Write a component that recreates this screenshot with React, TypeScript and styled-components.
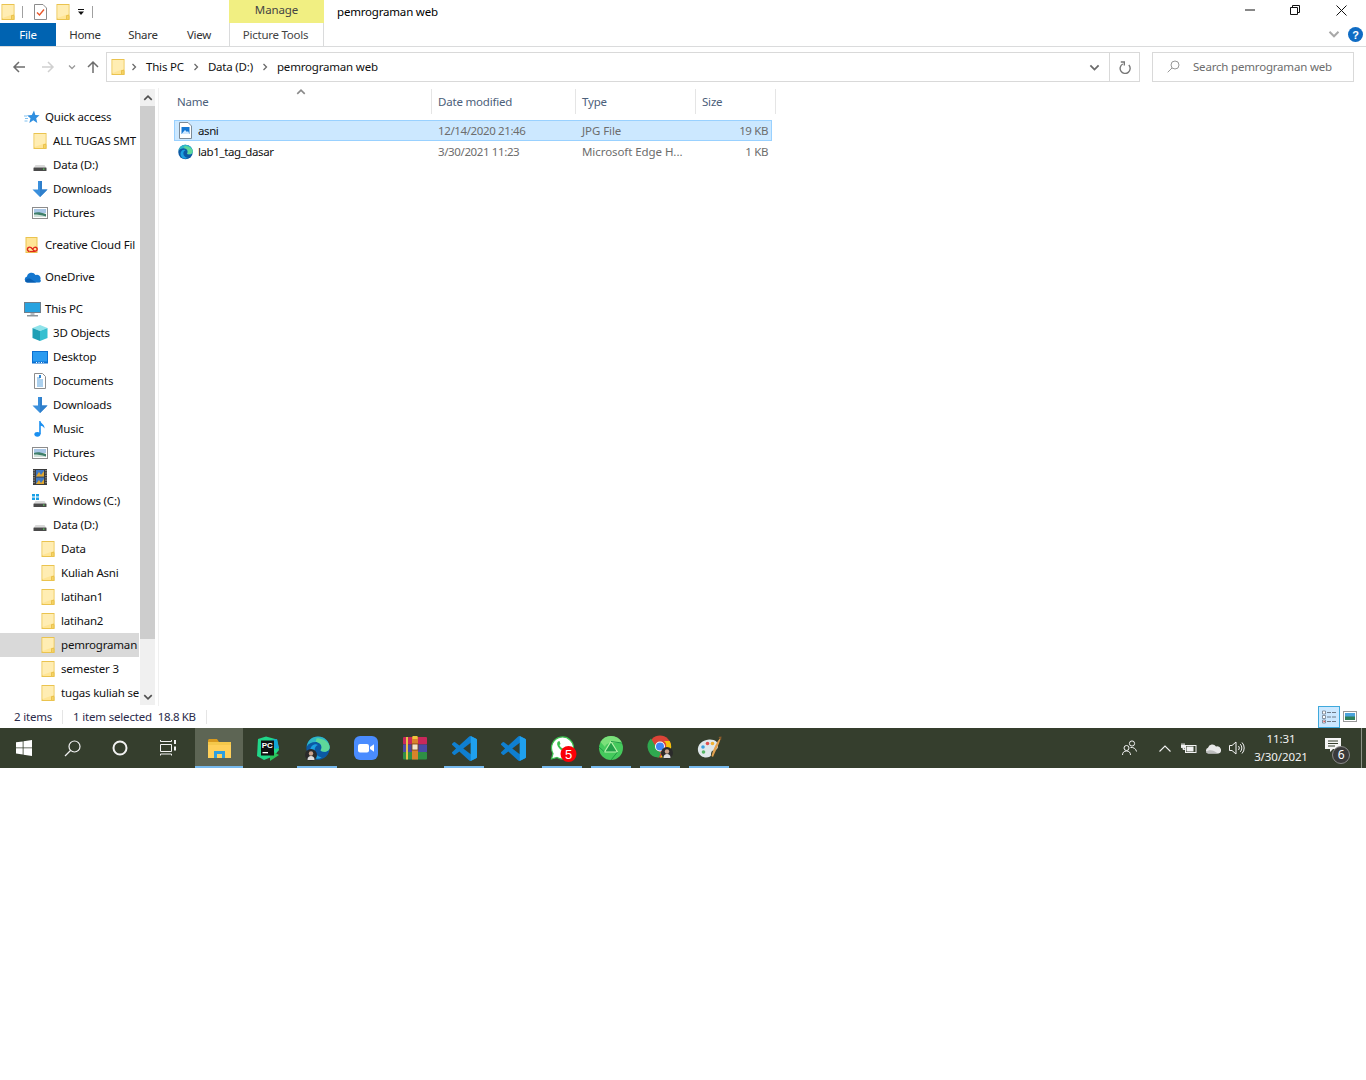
import React from 'react';
import styled, { createGlobalStyle } from 'styled-components';

const GlobalStyle = createGlobalStyle`
  html, body { margin: 0; padding: 0; background: #fff; }
  body { font-family: "Noto Sans", "Open Sans", Arial, sans-serif; font-size: 11.5px; letter-spacing: -0.19px; color: #000; }
  * { box-sizing: border-box; }
  svg { display: block; flex: none; }
`;

const Window = styled.div`
  width: 1366px;
  height: 728px;
  display: flex;
  flex-direction: column;
  overflow: hidden;
`;

/* title strip */
const TitleRow = styled.div`
  height: 23px;
  display: flex;
  align-items: center;
`;
const Qat = styled.div`
  width: 229px;
  display: flex;
  align-items: center;
  padding-left: 1px;
`;
const QatSep = styled.div<{ $left: number; $right: number }>`
  width: 1px;
  height: 12px;
  background: #a0a0a0;
  margin: 0 ${p => p.$right}px 0 ${p => p.$left}px;
`;
const QatGap = styled.div<{ $w: number }>`
  width: ${p => p.$w}px;
`;
const ManageTab = styled.div`
  width: 95px;
  height: 23px;
  background: #f1ef82;
  color: #444;
  letter-spacing: -0.1px;
  display: flex;
  align-items: center;
  justify-content: center;
  padding-bottom: 5px;
`;
const WindowTitle = styled.div`
  flex: 1;
  padding-left: 13px;
  padding-bottom: 1px;
`;
const WinButton = styled.div`
  width: 46px;
  height: 20px;
  display: flex;
  align-items: center;
  justify-content: center;
`;
const WinControls = styled.div`
  display: flex;
  margin-right: 2px;
  margin-top: -3px;
`;

/* ribbon tabs */
const RibbonRow = styled.div`
  height: 24px;
  display: flex;
  border-bottom: 1px solid #dadbdc;
`;
const FileTab = styled.div`
  width: 56px;
  background: #0063b1;
  color: #fff;
  display: flex;
  align-items: center;
  justify-content: center;
`;
const RibbonTab = styled.div<{ $w: number }>`
  width: ${p => p.$w}px;
  display: flex;
  align-items: center;
  justify-content: center;
  color: #333;
  letter-spacing: -0.25px;
`;
const ContextTab = styled(RibbonTab)`
  margin-left: 3px;
  border-left: 1px solid #dadbdc;
  border-right: 1px solid #dadbdc;
  height: 23px;
  background: #fff;
  color: #444;
  padding-right: 2px;
`;
const RibbonEnd = styled.div`
  margin-left: auto;
  display: flex;
  align-items: center;
  gap: 8px;
  padding-right: 3px;
  margin-top: -1px;
`;

/* address row */
const AddressRow = styled.div`
  height: 41px;
  padding-top: 5px;
  display: flex;
  align-items: flex-start;
`;
const NavButtons = styled.div`
  width: 106px;
  height: 30px;
  display: flex;
  align-items: center;
`;
const NavButton = styled.div<{ $w: number }>`
  width: ${p => p.$w}px;
  display: flex;
  justify-content: center;
`;
const AddressBox = styled.div`
  width: 1034px;
  height: 30px;
  border: 1px solid #d9d9d9;
  display: flex;
  align-items: center;
  padding-left: 4px;
`;
const Crumb = styled.span`
  color: #111;
  padding-bottom: 1px;
`;
const CrumbChevron = styled.div<{ $l: number; $r: number }>`
  margin: 0 ${p => p.$r}px 0 ${p => p.$l}px;
`;
const AddressEnd = styled.div`
  margin-left: auto;
  display: flex;
  height: 100%;
  align-items: center;
`;
const DropSlot = styled.div`
  width: 30px;
  height: 100%;
  display: flex;
  align-items: center;
  justify-content: center;
  border-right: 1px solid #d9d9d9;
`;
const RefreshSlot = styled.div`
  width: 29px;
  display: flex;
  justify-content: center;
`;
const SearchBox = styled.div`
  width: 202px;
  height: 30px;
  margin-left: 12px;
  border: 1px solid #d9d9d9;
  display: flex;
  align-items: center;
  padding: 0 0 1px 14px;
  color: #6d6d6d;
  gap: 13px;
`;

/* main */
const Main = styled.div`
  height: 618px;
  display: flex;
`;
const Sidebar = styled.div`
  width: 159px;
  display: flex;
  border-right: 1px solid #f0f0f0;
`;
const NavList = styled.div`
  width: 140px;
  padding-top: 17px;
  display: flex;
  flex-direction: column;
  overflow: hidden;
`;
const NavRow = styled.div<{ $selected?: boolean; $gap?: boolean }>`
  height: 24px;
  width: 139px;
  flex: none;
  display: flex;
  align-items: center;
  white-space: nowrap;
  color: #111;
  margin-top: ${p => (p.$gap ? 8 : 0)}px;
  background: ${p => (p.$selected ? '#d9d9d9' : 'transparent')};
`;
const NavIconSlot = styled.div<{ $level: number }>`
  width: ${p => 40 + p.$level * 8}px;
  flex: none;
  display: flex;
  justify-content: flex-end;
  margin-right: 5px;
`;
const NavLabel = styled.span`
  padding-bottom: 1px;
`;
const IconBox = styled.div`
  width: 16px;
  display: flex;
  justify-content: center;
`;
const Scrollbar = styled.div`
  width: 15px;
  margin-top: 1px;
  height: 616px;
  background: #f0f0f0;
  display: flex;
  flex-direction: column;
`;
const ScrollButton = styled.div`
  height: 17px;
  display: flex;
  align-items: center;
  justify-content: center;
  flex: none;
`;
const ScrollThumb = styled.div`
  height: 533px;
  background: #cdcdcd;
  flex: none;
`;
const ScrollSpacer = styled.div`
  flex: 1;
`;

const Content = styled.div`
  flex: 1;
  padding-left: 12px;
  padding-top: 1px;
  position: relative;
`;
const HeaderRow = styled.div`
  display: flex;
  height: 25px;
  margin-bottom: 6px;
`;
const HeaderCell = styled.div<{ $w: number }>`
  width: ${p => p.$w}px;
  padding-left: 6px;
  display: flex;
  align-items: center;
  color: #4c607a;
  border-right: 1px solid #e5e5e5;
`;
const SortCaret = styled.div`
  position: absolute;
  left: 137px;
  top: -1px;
`;
const FileRow = styled.div<{ $selected?: boolean }>`
  margin-left: 3px;
  width: 598px;
  height: 21px;
  display: grid;
  grid-template-columns: 257px 144px 120px 75px;
  align-items: center;
  border: 1px solid ${p => (p.$selected ? '#99d1ff' : 'transparent')};
  background: ${p => (p.$selected ? '#cce8ff' : 'transparent')};
`;
const NameCell = styled.div`
  display: flex;
  align-items: center;
  gap: 5px;
  padding-left: 3px;
  color: #111;
  letter-spacing: -0.4px;
`;
const DateCell = styled.div`
  color: #6d6d6d;
  padding-left: 6px;
  letter-spacing: -0.38px;
  white-space: nowrap;
`;
const TypeCell = styled.div`
  color: #6d6d6d;
  padding-left: 6px;
  letter-spacing: -0.07px;
  white-space: nowrap;
`;
const SizeCell = styled.div`
  color: #6d6d6d;
  padding-right: 3px;
  letter-spacing: -0.38px;
  text-align: right;
`;

/* status bar */
const StatusBar = styled.div`
  height: 22px;
  display: flex;
  align-items: center;
  padding: 0 0 1px 14px;
  color: #2a2a4a;
`;
const StatusSep = styled.div<{ $l: number; $r: number }>`
  width: 1px;
  height: 14px;
  background: #e5e5e5;
  margin: 0 ${p => p.$r}px 0 ${p => p.$l}px;
`;
const SelectedSize = styled.span`
  margin-left: 6px;
  letter-spacing: -0.4px;
`;
const ViewButtons = styled.div`
  margin-left: auto;
  margin-right: 8px;
  display: flex;
  align-items: center;
  gap: 2px;
`;
const ViewButton = styled.div<{ $active?: boolean }>`
  width: ${p => (p.$active ? 22 : 16)}px;
  height: 22px;
  display: flex;
  align-items: center;
  justify-content: center;
  background: ${p => (p.$active ? '#cce8ff' : 'transparent')};
  border: ${p => (p.$active ? '1px solid #3fa9dc' : 'none')};
`;

/* taskbar */
const Taskbar = styled.div`
  width: 1366px;
  height: 40px;
  background: #353e2d;
  display: flex;
  align-items: stretch;
  color: #fff;
`;
const StartGroup = styled.div`
  display: flex;
  margin-right: 3px;
`;
const TaskSlot = styled.div`
  width: 48px;
  display: flex;
  align-items: center;
  justify-content: center;
`;
const TaskItems = styled.div`
  display: flex;
  gap: 1px;
`;
const TaskItem = styled.div<{ $active?: boolean; $running?: boolean }>`
  width: 48px;
  position: relative;
  display: flex;
  align-items: center;
  justify-content: center;
  background: ${p => (p.$active ? '#5d6554' : 'transparent')};
  &::after {
    content: '';
    position: absolute;
    bottom: 0;
    height: 2px;
    left: ${p => (p.$active ? 0 : 4)}px;
    right: ${p => (p.$active ? 0 : 4)}px;
    background: ${p => (p.$active || p.$running ? '#76b9ed' : 'transparent')};
  }
`;
const Tray = styled.div`
  margin-left: auto;
  display: flex;
  align-items: stretch;
`;
const PeopleSlot = styled.div`
  width: 36px;
  margin-right: 6px;
  display: flex;
  align-items: center;
  justify-content: center;
`;
const TraySlot = styled.div`
  width: 24px;
  display: flex;
  align-items: center;
  justify-content: center;
`;
const Clock = styled.div`
  width: 64px;
  display: flex;
  flex-direction: column;
  align-items: center;
  justify-content: center;
  line-height: 18px;
  letter-spacing: -0.1px;
  color: #f2f2f2;
`;
const NotifySlot = styled.div`
  width: 40px;
  display: flex;
  align-items: center;
  justify-content: center;
  position: relative;
`;
const NotifyBubble = styled.svg`
  margin-top: -5px;
`;
const NotifyBadge = styled.div`
  position: absolute;
  left: 19px;
  top: 18px;
  width: 18px;
  height: 18px;
  border-radius: 50%;
  background: #3a3a3a;
  border: 1px solid #8a8a8a;
  color: #fff;
  font-size: 12px;
  line-height: 15px;
  text-align: center;
`;
const ShowDesktop = styled.div`
  width: 5px;
  margin-left: 8px;
  border-left: 1px solid #8d9287;
`;
const Blank = styled.div`
  height: 312px;
  background: #fff;
`;

/* ---------- icons ---------- */
const Folder = () => (
  <svg width="14" height="16" viewBox="0 0 14 16">
    <rect x="1" y=".5" width="12" height="15" fill="#ffe596" stroke="#eac34f" />
    <path d="M1.5 1h11v9l-11 4z" fill="#ffedb3" />
    <path d="M10.5 15.5v-4h2.5v4z" fill="#f6d365" stroke="#eac34f" />
  </svg>
);
const Drive = ({ flag }: { flag?: boolean }) => (
  <svg width="16" height="16" viewBox="0 0 16 16">
    <path d="M2 10.5 3.5 8h9l1.500 2.500z" fill="#d9d9d9" />
    <rect x="1.500" y="10.500" width="13" height="3.500" rx=".5" fill="#4a4a4a" />
    <rect x="11" y="11.500" width="1.500" height="1.200" fill="#5fd35f" />
    {flag && (
      <g fill="#19a0e6">
        <rect x="0" y="1" width="3" height="2.500" />
        <rect x="4" y="1" width="3" height="2.500" />
        <rect x="0" y="4.500" width="3" height="2.500" />
        <rect x="4" y="4.500" width="3" height="2.500" />
      </g>
    )}
  </svg>
);
const Down = () => (
  <svg width="16" height="16" viewBox="0 0 16 16">
    <path d="M6 0h4v8.500h5.500L8 16 .5 8.500H6z" fill="#3a8fdc" />
    <path d="M8 0h2v8.500h5.500L8 16z" fill="#2f7fcb" />
  </svg>
);
const Pics = () => (
  <svg width="16" height="12" viewBox="0 0 16 12">
    <rect x=".5" y=".5" width="15" height="11" fill="#fff" stroke="#8c8c8c" />
    <rect x="2" y="2" width="12" height="4" fill="#a9c6e6" />
    <path d="M2 6c3-1.500 6-1 12 1v3H2z" fill="#3f7f6a" />
    <path d="M2 7.500c4 0 7 .5 12 2V10H2z" fill="#cfe0d8" />
  </svg>
);
const Star = () => (
  <svg width="16" height="15" viewBox="0 0 16 15">
    <path d="M10 .5 11.300 5 15.500 5.300 12.200 8.200 13.300 13 9.300 10.300 5.300 13 6.500 8.300 3 5.500 7.800 5z" fill="#2f8fe0" />
    <path d="M0 6h3M1 8.500h3M.5 11h3" stroke="#7fc0f0" strokeWidth="1" />
  </svg>
);
const CcFolder = () => (
  <svg width="15" height="17" viewBox="0 0 15 17">
    <rect x="1" y=".5" width="11" height="15" fill="#ffe596" stroke="#eac34f" />
    <path d="M4.500 14.500a2.200 2.200 0 0 1 .3-4.400c1.200 0 2 1 2.700 2s1.400 2 2.600 2a2 2 0 0 0 .2-4c-1.200 0-1.900 1-2.500 1.800" fill="none" stroke="#e0291c" strokeWidth="1.400" />
    <path d="M4.500 14.500h6" stroke="#e0291c" strokeWidth="1.200" />
  </svg>
);
const OneDrive = () => (
  <svg width="17" height="12" viewBox="0 0 17 12">
    <path d="M3.600 11.500A3 3 0 0 1 3 5.600 4.600 4.600 0 0 1 11.500 4a3.600 3.600 0 0 1 4.800 4.600 1.900 1.900 0 0 1-.8 2.900z" fill="#1477cf" />
    <path d="M1.200 10.200c1-2.400 3.500-3.800 7-1.200l4 2.500H3.600c-1 0-1.900-.5-2.400-1.300z" fill="#0a5eb0" />
  </svg>
);
const Pc = () => (
  <svg width="17" height="15" viewBox="0 0 17 15">
    <rect x=".5" y=".5" width="16" height="10" fill="#27a3e0" stroke="#6f7f8c" />
    <rect x="6.500" y="11" width="4" height="2" fill="#b5bcc2" />
    <rect x="3" y="13" width="11" height="1.500" fill="#8d959b" />
  </svg>
);
const Cube = () => (
  <svg width="16" height="16" viewBox="0 0 16 16">
    <path d="M8 0 15.500 3 8 6 .5 3z" fill="#8fe3ea" />
    <path d="M.5 3 8 6v10L.5 13z" fill="#1e9fb5" />
    <path d="M15.500 3 8 6v10l7.500-3z" fill="#35bfd0" />
  </svg>
);
const Desk = () => (
  <svg width="16" height="13" viewBox="0 0 16 13">
    <rect width="16" height="12.500" fill="#0b6fd0" />
    <rect x="1" y="1" width="14" height="9.500" fill="#2a9bf0" />
    <path d="M4 11.500h8" stroke="#fff" strokeDasharray="1 1.500" />
  </svg>
);
const Doc = () => (
  <svg width="12" height="16" viewBox="0 0 12 16">
    <path d="M.5.500h8l3 3v12H.5z" fill="#fff" stroke="#8c8c8c" />
    <path d="M3 5h3M3 7h6M3 9h6M3 11h6M3 13h6" stroke="#5aa2dc" />
    <rect x="5" y="2" width="2" height="3" fill="#2e86d4" />
  </svg>
);
const Note = () => (
  <svg width="12" height="16" viewBox="0 0 12 16">
    <ellipse cx="3.400" cy="13.300" rx="3" ry="2.400" fill="#1a8ff0" />
    <path d="M5.200 13V0h1.300c.2 2.600 4.500 3.600 4 7.500-.7-1.800-2.500-2.600-3.700-2.800V13z" fill="#1a8ff0" />
  </svg>
);
const Film = () => (
  <svg width="14" height="16" viewBox="0 0 14 16">
    <rect width="14" height="16" fill="#3a3a3a" />
    <path d="M1 1v14M13 1v14" stroke="#bbb" strokeDasharray="1.200 1.200" />
    <rect x="3" y="1" width="8" height="6.500" fill="#3f78c4" />
    <rect x="3" y="8.500" width="8" height="6.500" fill="#3f78c4" />
    <path d="M3 7.500 6 3l2 3 3-4v5.500zM3 15l3-4 2 3 3-4v5z" fill="#e2a72e" />
  </svg>
);
const PictureFile = () => (
  <svg width="15" height="17" viewBox="0 0 15 17">
    <path d="M1.500.5h8.500l3.500 3.500v12.500h-12z" fill="#fff" stroke="#7c8a96" />
    <rect x="3.500" y="5" width="8" height="7" fill="#1577d2" />
    <path d="M3.500 12 7 8l2 2 1-1 1.500 3z" fill="#cfe8ff" />
  </svg>
);
const EdgeMark = () => (
  <>
    <circle cx="16" cy="16" r="15.500" fill="#0c59a4" />
    <path d="M1 14C2 6 8 .5 16 .5c8.500 0 15.500 6.500 15.500 14.500 0 4-3.500 6-7 6-3 0-5-1-5-2 0-.7 1.300-1.200 1.300-3.600C20.800 11 17 8 13 8 7.500 8 3 10 1 14z" fill="#2fb7c6" />
    <path d="M14 3c7 0 14 3 16.500 8 .7 1.500 1 2.500 1 4 0 4-3.500 6-7 6-3 0-5-1-5-2 0-.7 1.300-1.200 1.300-3.600C20.800 11 17 8 13 8z" fill="#5ed89a" />
    <path d="M13 30c-6-1.500-9-8-7-13.500C8 11 13 10 16 12c-3 1-5 4-4.500 8 .5 4 4 7.500 9.500 8.500-2.500 1.500-5 2-8 1.500z" fill="#1b9fe0" />
  </>
);
const Avatar = ({ x, y }: { x: number; y: number }) => (
  <g transform={`translate(${x} ${y})`}>
    <circle cx="6" cy="6" r="6" fill="#2a2a2a" />
    <circle cx="6" cy="4.500" r="2.200" fill="#caa48d" />
    <path d="M2.500 11c0-3 1.500-4 3.500-4s3.500 1 3.500 4z" fill="#ddd" />
  </g>
);
const Chevron = ({ color = '#808080', dir = 'down', w = 8 }: { color?: string; dir?: 'down' | 'up' | 'right'; w?: number }) => {
  const d = dir === 'down' ? 'M1 2.500 4 5.500 7 2.500' : dir === 'up' ? 'M1 5.500 4 2.500 7 5.500' : 'M2.500 1 5.500 4 2.500 7';
  return (
    <svg width={w} height={w} viewBox="0 0 8 8">
      <path d={d} fill="none" stroke={color} strokeWidth="1.300" />
    </svg>
  );
};
const ArrowSvg = styled.svg<{ $rotate: number }>`
  transform: rotate(${p => p.$rotate}deg);
`;
const Arrow = ({ color, rotate = 0 }: { color: string; rotate?: number }) => (
  <ArrowSvg $rotate={rotate} width="14" height="14" viewBox="0 0 14 14">
    <path d="M13 7H2M7 2 2 7l5 5" fill="none" stroke={color} strokeWidth="1.500" />
  </ArrowSvg>
);
const Vscode = () => (
  <svg width="25" height="25" viewBox="0 0 24 24">
    <path fillRule="evenodd" d="M23.150 2.587 18.210.21a1.494 1.494 0 0 0-1.705.29l-9.460 8.630-4.120-3.128a.999.999 0 0 0-1.276.057L.327 7.261A1 1 0 0 0 .326 8.740L3.899 12 .326 15.260a1 1 0 0 0 .001 1.479L1.650 17.940a.999.999 0 0 0 1.276.057l4.120-3.128 9.460 8.630a1.492 1.492 0 0 0 1.704.29l4.942-2.377A1.500 1.500 0 0 0 24 20.060V3.939a1.500 1.500 0 0 0-.85-1.352zm-5.146 14.861L10.826 12l7.178-5.448v10.896z" fill="#0f7fd0" />
    <path d="M18 .1l5.150 2.487A1.500 1.500 0 0 1 24 3.939V20.060a1.500 1.500 0 0 1-.85 1.352L18 23.900z" fill="#1fa0ee" />
  </svg>
);

type NavEntry = { label: string; level: number; icon: React.ReactNode; gap?: boolean; selected?: boolean };
const navEntries: NavEntry[] = [
  { label: 'Quick access', level: 0, icon: <Star /> },
  { label: 'ALL TUGAS SMT', level: 1, icon: <Folder /> },
  { label: 'Data (D:)', level: 1, icon: <Drive /> },
  { label: 'Downloads', level: 1, icon: <Down /> },
  { label: 'Pictures', level: 1, icon: <Pics /> },
  { label: 'Creative Cloud Fil', level: 0, icon: <CcFolder />, gap: true },
  { label: 'OneDrive', level: 0, icon: <OneDrive />, gap: true },
  { label: 'This PC', level: 0, icon: <Pc />, gap: true },
  { label: '3D Objects', level: 1, icon: <Cube /> },
  { label: 'Desktop', level: 1, icon: <Desk /> },
  { label: 'Documents', level: 1, icon: <Doc /> },
  { label: 'Downloads', level: 1, icon: <Down /> },
  { label: 'Music', level: 1, icon: <Note /> },
  { label: 'Pictures', level: 1, icon: <Pics /> },
  { label: 'Videos', level: 1, icon: <Film /> },
  { label: 'Windows (C:)', level: 1, icon: <Drive flag /> },
  { label: 'Data (D:)', level: 1, icon: <Drive /> },
  { label: 'Data', level: 2, icon: <Folder /> },
  { label: 'Kuliah Asni', level: 2, icon: <Folder /> },
  { label: 'latihan1', level: 2, icon: <Folder /> },
  { label: 'latihan2', level: 2, icon: <Folder /> },
  { label: 'pemrograman', level: 2, icon: <Folder />, selected: true },
  { label: 'semester 3', level: 2, icon: <Folder /> },
  { label: 'tugas kuliah se', level: 2, icon: <Folder /> },
];

const App = () => {
  return (
    <>
      <GlobalStyle />
      <Window>
        <TitleRow>
          <Qat>
            <Folder />
            <QatSep $left={7} $right={11} />
            <svg width="13" height="16" viewBox="0 0 13 16">
              <path d="M.5.500h8.500l3.500 3.500v11.500H.5z" fill="#fff" stroke="#8c8c8c" />
              <path d="M3 8.500 5.500 11 10 5.500" fill="none" stroke="#e8562a" strokeWidth="1.400" />
            </svg>
            <QatGap $w={9} />
            <Folder />
            <QatGap $w={7} />
            <svg width="8" height="8" viewBox="0 0 8 8">
              <path d="M1 1h6v1H1zM1 3.500h6L4 7z" fill="#111" />
            </svg>
            <QatSep $left={7} $right={0} />
          </Qat>
          <ManageTab>Manage</ManageTab>
          <WindowTitle>pemrograman web</WindowTitle>
          <WinControls>
            <WinButton>
              <svg width="12" height="10" viewBox="0 0 12 10"><path d="M2 5h10" stroke="#111" /></svg>
            </WinButton>
            <WinButton>
              <svg width="10" height="10" viewBox="0 0 10 10">
                <path d="M.5 2.500h7v7h-7zM2.500 2.500v-2h7v7h-2" fill="none" stroke="#111" />
              </svg>
            </WinButton>
            <WinButton>
              <svg width="11" height="11" viewBox="0 0 11 11"><path d="M.5.500l10 10M10.500.500l-10 10" stroke="#111" /></svg>
            </WinButton>
          </WinControls>
        </TitleRow>

        <RibbonRow>
          <FileTab>File</FileTab>
          <RibbonTab $w={58}>Home</RibbonTab>
          <RibbonTab $w={58}>Share</RibbonTab>
          <RibbonTab $w={54}>View</RibbonTab>
          <ContextTab $w={95}>Picture Tools</ContextTab>
          <RibbonEnd>
            <Chevron color="#a8a8a8" w={12} />
            <svg width="15" height="15" viewBox="0 0 15 15">
              <circle cx="7.500" cy="7.500" r="7.500" fill="#0f6cc4" />
              <text x="7.500" y="11.500" textAnchor="middle" fontSize="11" fontWeight="700" fill="#fff" fontFamily="Liberation Sans">?</text>
            </svg>
          </RibbonEnd>
        </RibbonRow>

        <AddressRow>
          <NavButtons>
            <NavButton $w={37}><Arrow color="#6d6d6d" /></NavButton>
            <NavButton $w={22}><Arrow color="#d0d0d0" rotate={180} /></NavButton>
            <NavButton $w={26}><Chevron color="#9a9a9a" /></NavButton>
            <NavButton $w={16}><Arrow color="#6d6d6d" rotate={90} /></NavButton>
          </NavButtons>
          <AddressBox>
            <Folder />
            <CrumbChevron $l={5} $r={8}><Chevron dir="right" color="#6a6a6a" /></CrumbChevron>
            <Crumb>This PC</Crumb>
            <CrumbChevron $l={8} $r={8}><Chevron dir="right" color="#6a6a6a" /></CrumbChevron>
            <Crumb>Data (D:)</Crumb>
            <CrumbChevron $l={8} $r={8}><Chevron dir="right" color="#6a6a6a" /></CrumbChevron>
            <Crumb>pemrograman web</Crumb>
            <AddressEnd>
              <DropSlot><Chevron color="#6a6a6a" w={11} /></DropSlot>
              <RefreshSlot>
                <svg width="12" height="13" viewBox="0 0 12 13">
                  <path d="M9.800 4A5 5 0 1 1 3.800 3" fill="none" stroke="#777" strokeWidth="1.400" />
                  <path d="M1.800 1h3.500v3.500" fill="none" stroke="#777" strokeWidth="1.400" />
                </svg>
              </RefreshSlot>
            </AddressEnd>
          </AddressBox>
          <SearchBox>
            <svg width="13" height="13" viewBox="0 0 13 13">
              <circle cx="8" cy="5" r="4" fill="none" stroke="#999" />
              <path d="M5 8 .7 12.300" stroke="#999" />
            </svg>
            Search pemrograman web
          </SearchBox>
        </AddressRow>

        <Main>
          <Sidebar>
            <NavList>
              {navEntries.map((entry, i) => (
                <NavRow key={i} $gap={entry.gap} $selected={entry.selected}>
                  <NavIconSlot $level={entry.level}><IconBox>{entry.icon}</IconBox></NavIconSlot>
                  <NavLabel>{entry.label}</NavLabel>
                </NavRow>
              ))}
            </NavList>
            <Scrollbar>
              <ScrollButton><Chevron dir="up" color="#505050" w={10} /></ScrollButton>
              <ScrollThumb />
              <ScrollSpacer />
              <ScrollButton><Chevron color="#505050" w={10} /></ScrollButton>
            </Scrollbar>
          </Sidebar>
          <Content>
            <SortCaret><Chevron dir="up" color="#8a8a8a" w={10} /></SortCaret>
            <HeaderRow>
              <HeaderCell $w={261}>Name</HeaderCell>
              <HeaderCell $w={144}>Date modified</HeaderCell>
              <HeaderCell $w={120}>Type</HeaderCell>
              <HeaderCell $w={80}>Size</HeaderCell>
            </HeaderRow>
            <FileRow $selected>
              <NameCell><PictureFile />asni</NameCell>
              <DateCell>12/14/2020 21:46</DateCell>
              <TypeCell>JPG File</TypeCell>
              <SizeCell>19 KB</SizeCell>
            </FileRow>
            <FileRow>
              <NameCell>
                <svg width="15" height="16" viewBox="0 0 32 32"><EdgeMark /></svg>
                lab1_tag_dasar
              </NameCell>
              <DateCell>3/30/2021 11:23</DateCell>
              <TypeCell>Microsoft Edge H...</TypeCell>
              <SizeCell>1 KB</SizeCell>
            </FileRow>
          </Content>
        </Main>

        <StatusBar>
          2 items
          <StatusSep $l={10} $r={10} />
          1 item selected
          <SelectedSize>18.8 KB</SelectedSize>
          <StatusSep $l={11} $r={0} />
          <ViewButtons>
            <ViewButton $active>
              <svg width="16" height="16" viewBox="0 0 16 16">
                <path d="M1.500 2h3v3h-3zM1.500 6.500h3v3h-3zM1.500 11h3v3h-3z" fill="#fff" stroke="#6e7a88" strokeWidth=".8" />
                <path d="M6 3.500h4M11 3.500h4M6 8h4M11 8h4M6 12.500h4M11 12.500h4" stroke="#6e7a88" />
                <rect x="2.500" y="11.800" width="1.300" height="1.300" fill="#d33" />
              </svg>
            </ViewButton>
            <ViewButton>
              <svg width="14" height="11" viewBox="0 0 14 11">
                <rect x=".5" y=".5" width="13" height="10" fill="#fff" stroke="#999" />
                <rect x="2" y="2" width="10" height="4" fill="#4aa3dc" />
                <rect x="2" y="5.500" width="10" height="3.500" fill="#2f7f5a" />
              </svg>
            </ViewButton>
          </ViewButtons>
        </StatusBar>
      </Window>

      <Taskbar>
        <StartGroup>
          <TaskSlot>
            <svg width="16" height="16" viewBox="0 0 16 16" fill="#fff">
              <path d="M0 2.300 6.700 1.400V7.500H0zM7.500 1.300 16 0V7.500H7.500zM0 8.300H6.700V14.500L0 13.600zM7.500 8.300H16V16L7.500 14.700z" />
            </svg>
          </TaskSlot>
          <TaskSlot>
            <svg width="17" height="17" viewBox="0 0 17 17" fill="none" stroke="#f2f2f2" strokeWidth="1.200">
              <circle cx="10.500" cy="6.500" r="5.500" />
              <path d="M6.500 10.500 1 16" />
            </svg>
          </TaskSlot>
          <TaskSlot>
            <svg width="16" height="16" viewBox="0 0 16 16">
              <circle cx="8" cy="8" r="6.500" fill="none" stroke="#f2f2f2" strokeWidth="2" />
            </svg>
          </TaskSlot>
          <TaskSlot>
            <svg width="16" height="16" viewBox="0 0 16 16" fill="none" stroke="#f2f2f2">
              <path d="M.5 0v1.500h11V0M.5 4.500h11v7H.5zM.5 15.500V14h11v1.500" />
              <path d="M15 0v4M15 6.500v4" strokeWidth="2" />
            </svg>
          </TaskSlot>
        </StartGroup>
        <TaskItems>
          <TaskItem $active>
            <svg width="23" height="19" viewBox="0 0 23 19">
              <path d="M0 1.500C0 .7.700 0 1.500 0H9l2 3H0z" fill="#d99a1e" />
              <path d="M0 3h23v16H0z" fill="#ffd05a" />
              <path d="M0 3h23v3H0z" fill="#f5c84b" />
              <rect x="6" y="12" width="11" height="7" fill="#2d9fe0" />
              <rect x="9" y="15" width="5" height="4" fill="#ffd05a" />
            </svg>
          </TaskItem>
          <TaskItem>
            <svg width="24" height="25" viewBox="0 0 24 25">
              <path d="M2 3 10 .5l11 3L23 14 18 20 8 24 1 20z" fill="#21d789" />
              <path d="M15 4l6-1 2 9-4 1z" fill="#12a5d8" />
              <path d="M14 14l9 5-9 6z" fill="#2ac25a" />
              <rect x="5" y="4.500" width="13" height="15" fill="#111" />
              <text x="5.800" y="12" fontSize="8" fontWeight="700" fill="#fff" fontFamily="Liberation Sans">PC</text>
              <rect x="6.500" y="16" width="5.500" height="1.300" fill="#fff" />
            </svg>
          </TaskItem>
          <TaskItem $running>
            <svg width="25" height="25" viewBox="0 0 25 25">
              <svg x="1" y="0" width="24" height="24" viewBox="0 0 32 32"><EdgeMark /></svg>
              <Avatar x={0} y={13} />
            </svg>
          </TaskItem>
          <TaskItem>
            <svg width="24" height="24" viewBox="0 0 24 24">
              <rect width="24" height="24" rx="6" fill="#4a8cff" />
              <rect x="4" y="8" width="11" height="8.500" rx="2" fill="#fff" />
              <path d="M16 11l4-2.700v7.400L16 13z" fill="#fff" />
            </svg>
          </TaskItem>
          <TaskItem>
            <svg width="24" height="24" viewBox="0 0 24 24">
              <rect y="1" width="24" height="7.500" rx="1" fill="#c9285b" />
              <rect y="8.500" width="24" height="7.500" fill="#4a4aa8" />
              <rect y="16" width="24" height="7.500" rx="1" fill="#2f8f45" />
              <rect x="3" y="1" width="2" height="22.500" fill="#e8c24a" />
              <rect x="9" y="1" width="6" height="22.500" fill="#d9822b" />
              <rect x="9" y="8" width="6" height="6" fill="#f2e6c8" stroke="#7a3e12" strokeWidth=".8" />
              <rect x="9.500" y="0" width="5" height="3" fill="#f0c33c" />
            </svg>
          </TaskItem>
          <TaskItem $running><Vscode /></TaskItem>
          <TaskItem><Vscode /></TaskItem>
          <TaskItem $running>
            <svg width="29" height="28" viewBox="0 0 29 28">
              <path d="M3.500 25 5 19.500A11 11 0 1 1 9 23.500z" fill="#fff" stroke="#3bc24f" strokeWidth="1.200" />
              <path d="M10 7.500c-1.500 1.500-1 4 1 6.500s4.500 4 6.500 3.500c1-.3 1.500-1.500 1.500-2.500l-3-1.500-1 1.200c-1.500-.5-3-2.200-3.500-3.700l1-1L11.500 7z" fill="#3bc24f" />
              <circle cx="20.500" cy="20" r="8" fill="#fb0007" />
              <text x="20.500" y="24.500" textAnchor="middle" fontSize="13" fill="#fff" fontFamily="Liberation Sans">5</text>
            </svg>
          </TaskItem>
          <TaskItem $running>
            <svg width="24" height="24" viewBox="0 0 24 24">
              <circle cx="12" cy="12" r="12" fill="#45c95c" />
              <path d="M12 0a12 12 0 0 1 11 7H13C9 7 7 8 6 11L1.500 6A12 12 0 0 1 12 0z" fill="#7be07a" />
              <path d="M12 5.500 18.500 16H5.500z" fill="#23a049" stroke="#b8f3ab" strokeWidth="1.200" strokeLinejoin="round" />
              <path d="M18.500 16 12 24M5.500 16 0 11M12 5.500 23 7" stroke="#1f9a45" strokeWidth="1" />
            </svg>
          </TaskItem>
          <TaskItem $running>
            <svg width="30" height="26" viewBox="0 0 30 26">
              <g transform="translate(4 0)">
                <circle cx="11" cy="11.500" r="11" fill="#db4437" />
                <path d="M20.600 6A11 11 0 0 1 11 22.500l5-8.500a5.500 5.500 0 0 0-1-8z" fill="#f4c20d" />
                <path d="M2 3.500 7 12a5.500 5.500 0 0 0 5 5l-2 5.500A11 11 0 0 1 2 3.500z" fill="#2fa84f" />
                <circle cx="11" cy="11.500" r="5" fill="#fff" />
                <circle cx="11" cy="11.500" r="4" fill="#4285f4" />
                <Avatar x={12} y={12} />
              </g>
            </svg>
          </TaskItem>
          <TaskItem $running>
            <svg width="25" height="25" viewBox="0 0 25 25">
              <path d="M1 15C0 9 5 4 12 3.500c6-.4 9 2.500 9 6.500s-3 4-5 4.500-2 3-2 4.500-2 2.500-5 2.500-7-2-8-6.500z" fill="#dfe7ea" />
              <circle cx="6" cy="11" r="1.800" fill="#3aa0e0" />
              <circle cx="10.500" cy="7.500" r="1.800" fill="#e05050" />
              <circle cx="15.500" cy="7.500" r="1.800" fill="#f0b030" />
              <circle cx="6.500" cy="16" r="1.800" fill="#55b565" />
              <path d="M24 1c-1 5-4 11-8 20l-1.500-1c2-8 5-14 9.500-19z" fill="#e0a050" />
              <path d="M21.500 1l3-.5-.5 4z" fill="#8a5a2a" />
            </svg>
          </TaskItem>
        </TaskItems>

        <Tray>
          <PeopleSlot>
            <svg width="15" height="16" viewBox="0 0 15 16" fill="none" stroke="#f2f2f2">
              <circle cx="10" cy="3.500" r="2.600" />
              <circle cx="4.500" cy="8" r="2.500" />
              <path d="M.5 15c0-2.500 1.500-4 4-4s4 1.500 4 4M8.500 7.500c2.500-.5 5.500 1 6 4" />
            </svg>
          </PeopleSlot>
          <TraySlot>
            <svg width="12" height="7" viewBox="0 0 12 7"><path d="M.5 6.500 6 1l5.500 5.500" fill="none" stroke="#f2f2f2" strokeWidth="1.100" /></svg>
          </TraySlot>
          <TraySlot>
            <svg width="16" height="11" viewBox="0 0 16 11">
              <rect x="4.500" y="2.500" width="10.500" height="7" fill="none" stroke="#f2f2f2" />
              <rect x="5.500" y="3.500" width="7" height="5" fill="#f2f2f2" />
              <path d="M1 0v2M3 0v2M0 2h4v2.500H0zM2 4.500v2h3" fill="#f2f2f2" stroke="#f2f2f2" strokeWidth=".8" />
            </svg>
          </TraySlot>
          <TraySlot>
            <svg width="16" height="11" viewBox="0 0 16 11">
              <path d="M3.500 10.500A3 3 0 0 1 3 4.700 4.500 4.500 0 0 1 11 3.500a3.500 3.500 0 0 1 2.500 7z" fill="#e8e8e8" />
              <path d="M1 9c2-2 5-2.500 8-1l4 2.500H3.500C2.500 10.500 1.500 10 1 9z" fill="#bdbdbd" />
            </svg>
          </TraySlot>
          <TraySlot>
            <svg width="16" height="14" viewBox="0 0 16 14" fill="none" stroke="#f2f2f2">
              <path d="M.5 4.500H3L7 1v12L3 9.500H.5z" />
              <path d="M9.500 5a3 3 0 0 1 0 4M11.300 3.200a5.500 5.500 0 0 1 0 7.600M13 1.500a8 8 0 0 1 0 11" />
            </svg>
          </TraySlot>
          <Clock>
            <span>11:31</span>
            <span>3/30/2021</span>
          </Clock>
          <NotifySlot>
            <NotifyBubble width="16" height="15" viewBox="0 0 16 15">
              <path d="M0 0h16v11H8l-3 3v-3H0z" fill="#f5f5f5" />
              <path d="M3 3h10M3 5.500h10M3 8h7" stroke="#353e2d" />
            </NotifyBubble>
            <NotifyBadge>6</NotifyBadge>
          </NotifySlot>
          <ShowDesktop />
        </Tray>
      </Taskbar>
      <Blank />
    </>
  );
};

export default App;
